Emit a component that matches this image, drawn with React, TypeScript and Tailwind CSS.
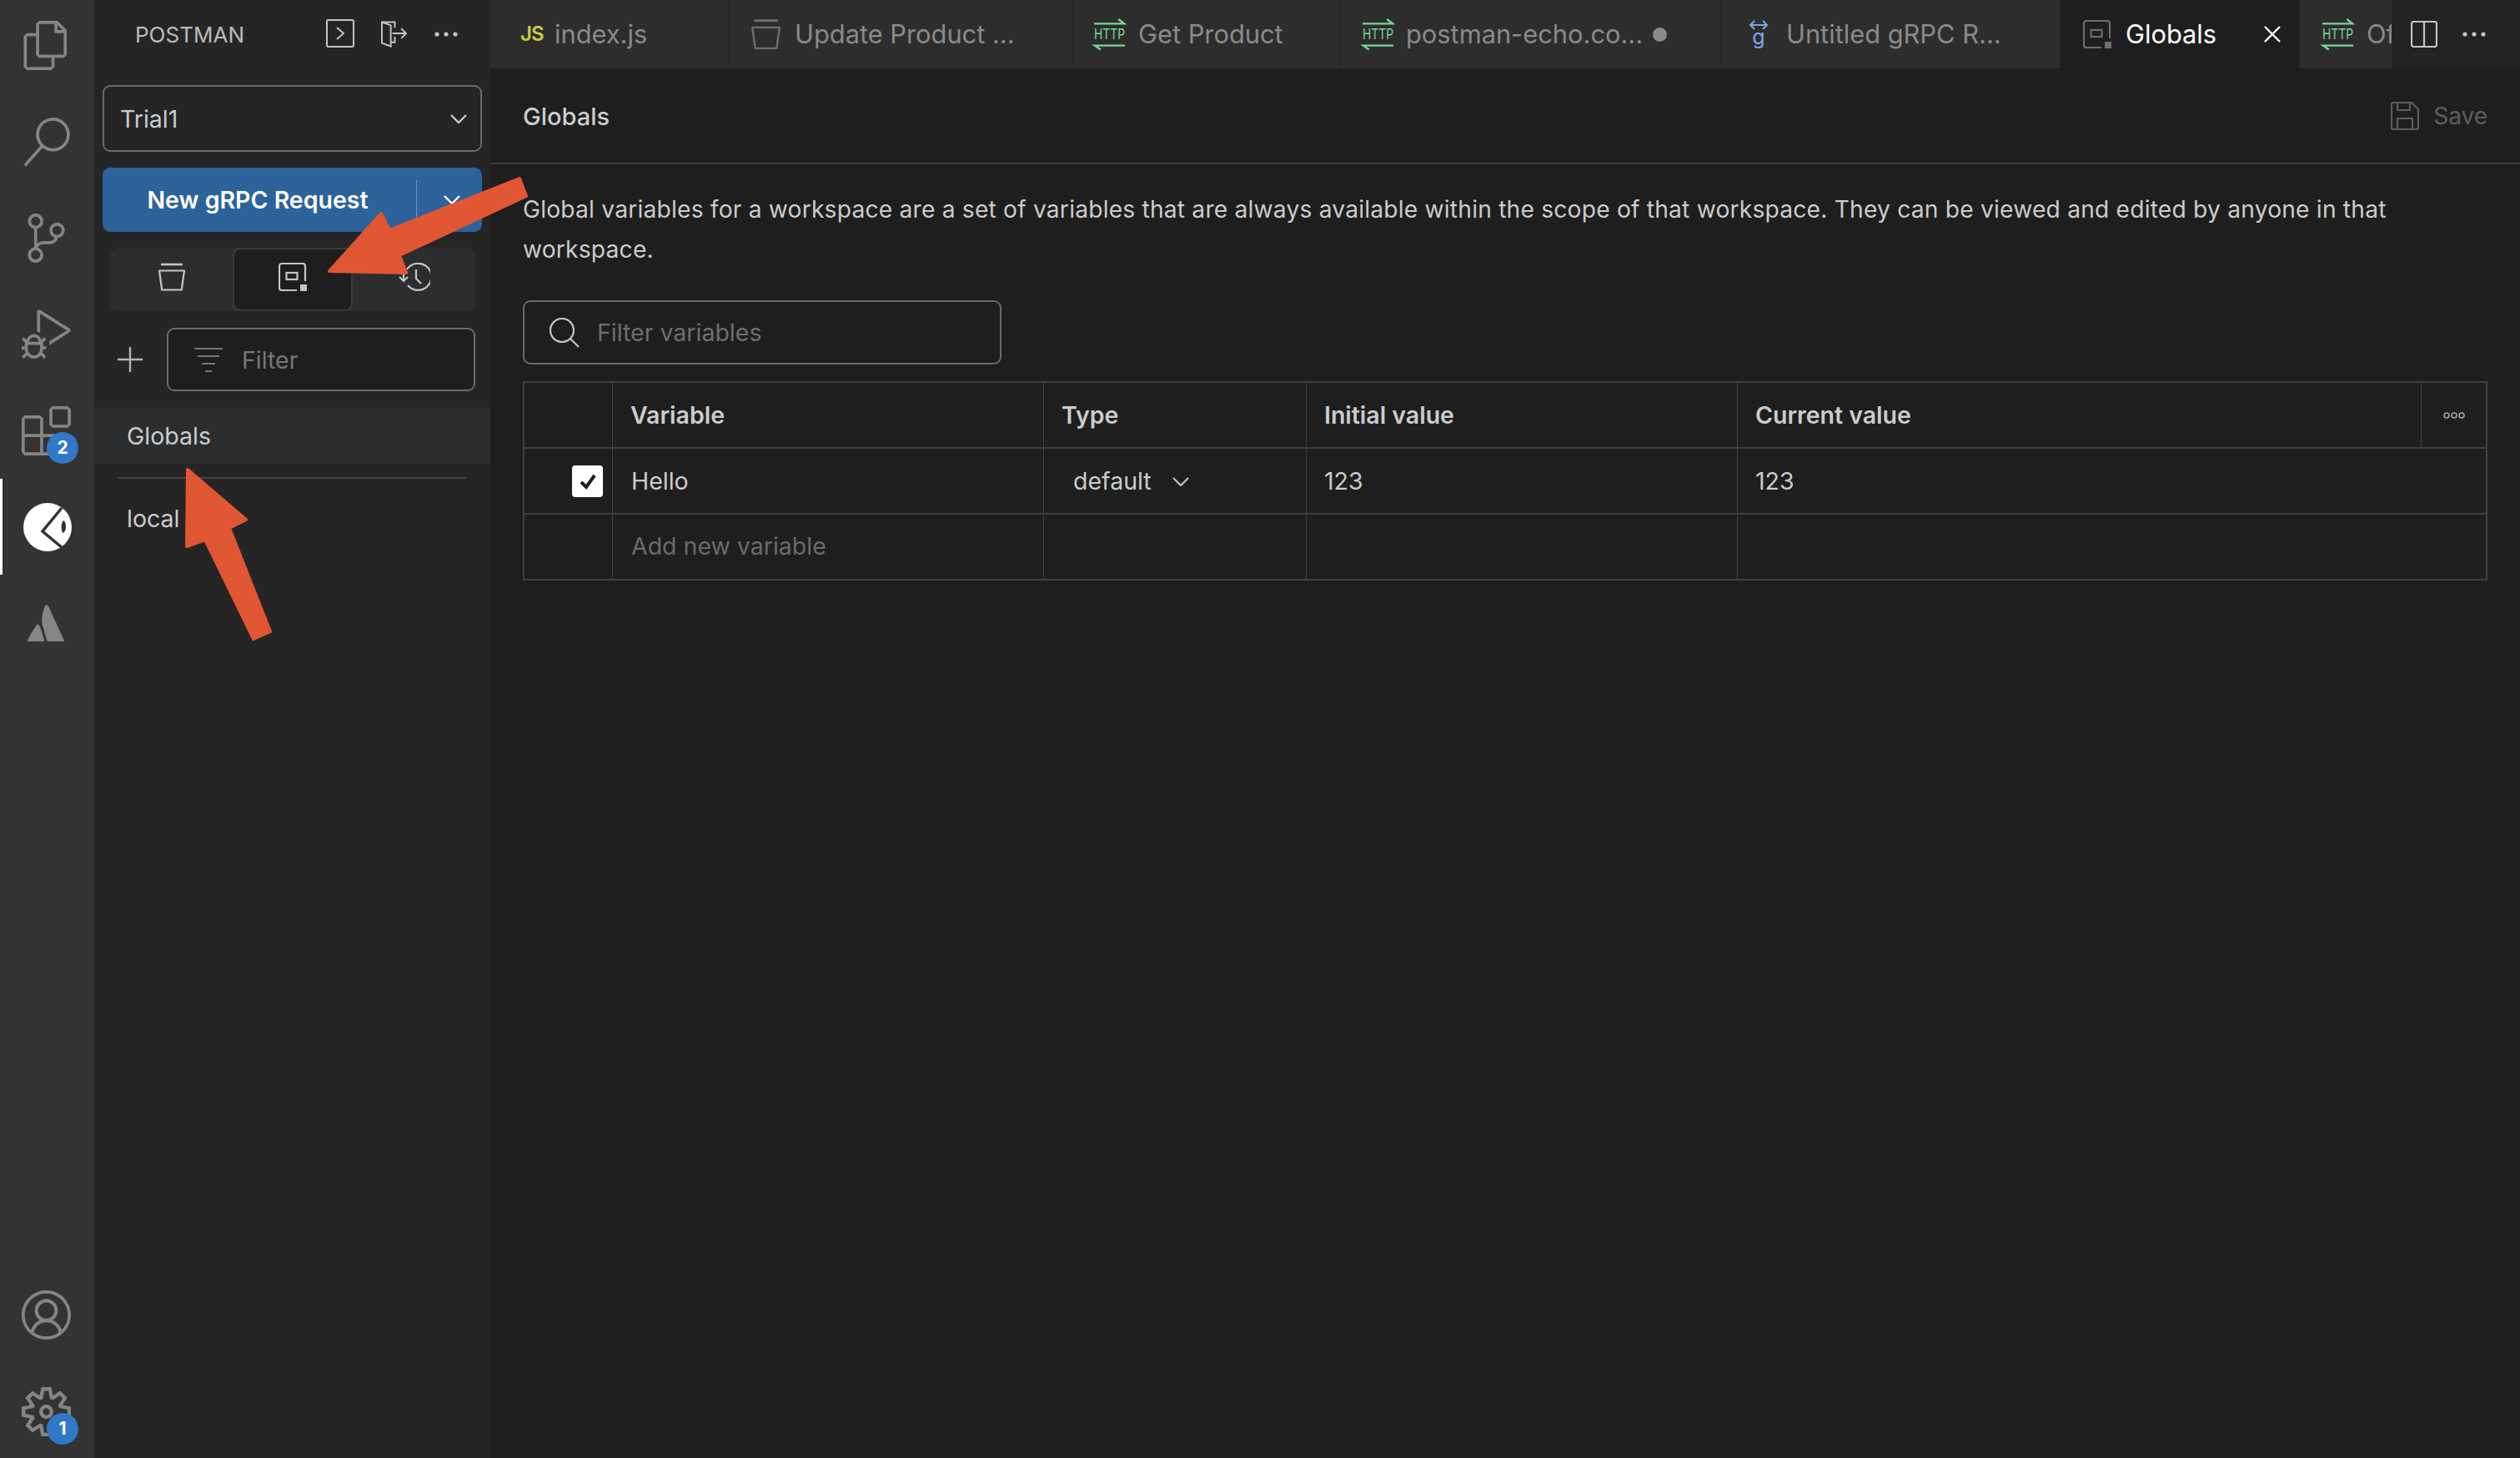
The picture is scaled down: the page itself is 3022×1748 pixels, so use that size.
import type { ReactNode } from "react";
import {
  VscAccount,
  VscDebugAlt,
  VscExtensions,
  VscFiles,
  VscSearch,
  VscSettingsGear,
  VscSourceControl,
} from "react-icons/vsc";

function CollectionIcon({ className }: { className?: string }) {
  return (
    <svg viewBox="0 0 34 34" fill="none" stroke="currentColor" strokeWidth="2.2" className={className}>
      <path d="M4 2h26" strokeWidth="2.6" />
      <path d="M2 9.5h30l-3.2 23H5.2z" strokeLinejoin="round" />
    </svg>
  );
}

function EnvIcon({ className }: { className?: string }) {
  return (
    <svg viewBox="0 0 34 34" fill="none" stroke="currentColor" strokeWidth="2.2" className={className}>
      <path d="M32 22V4a3 3 0 0 0-3-3H4a3 3 0 0 0-3 3v26a3 3 0 0 0 3 3h18" />
      <rect x="9.5" y="12" width="13" height="8" />
      <rect x="26" y="26" width="8" height="8" fill="currentColor" stroke="none" />
    </svg>
  );
}

function HistoryIcon({ className }: { className?: string }) {
  return (
    <svg viewBox="0 0 38 34" fill="none" stroke="currentColor" strokeWidth="2.2" className={className}>
      <path d="M10 8a16 16 0 1 1 1 19" />
      <path d="M21 8v11l6 6" />
      <path d="M6 11v11M1 17l5 5 5-5" />
    </svg>
  );
}

function ChevronDown({ className }: { className?: string }) {
  return (
    <svg viewBox="0 0 20 11" fill="none" stroke="currentColor" strokeWidth="2.4" className={className}>
      <path d="M1 1l9 9 9-9" />
    </svg>
  );
}

function DotsIcon({ className }: { className?: string }) {
  return (
    <svg viewBox="0 0 28 6" fill="currentColor" className={className}>
      <circle cx="3" cy="3" r="2.6" />
      <circle cx="14" cy="3" r="2.6" />
      <circle cx="25" cy="3" r="2.6" />
    </svg>
  );
}

function HttpIcon() {
  return (
    <svg viewBox="0 0 40 38" className="h-[38px] w-[39px] shrink-0 overflow-visible text-[#7bd69b]" fill="none" stroke="currentColor" strokeWidth="2.4">
      <path d="M1 6h37L31 0.5" />
      <path d="M39 33H2l7 5" />
      <text x="20" y="25.5" textAnchor="middle" fill="currentColor" stroke="none" fontSize="18" textLength="38" lengthAdjust="spacingAndGlyphs" fontFamily="Inter">
        HTTP
      </text>
    </svg>
  );
}

function JsIcon() {
  return <span className="w-[24px] shrink-0 text-[24px] leading-none font-semibold tracking-[-1px] text-[#cbcb41]">JS</span>;
}

function GrpcIcon() {
  return (
    <svg viewBox="0 0 24 38" className="h-[38px] w-[24px] shrink-0 text-[#7ba8ea]" fill="none" stroke="currentColor" strokeWidth="2">
      <path d="M2 8h20M7 3L2 8l5 5M17 3l5 5-5 5" />
      <text x="12" y="31" textAnchor="middle" fill="currentColor" stroke="none" fontSize="25" fontFamily="Inter">
        g
      </text>
    </svg>
  );
}

type TabProps = {
  width: string;
  pad: string;
  gap: string;
  icon: ReactNode;
  label: string;
  active?: boolean;
  children?: ReactNode;
};

function Tab({ width, pad, gap, icon, label, active, children }: TabProps) {
  return (
    <div
      className={`flex h-full shrink-0 items-center border-r border-[#252525] ${width} ${pad} ${gap} ${
        active ? "bg-[#1e1e1e] text-white" : "bg-[#2d2d2d] text-[#8a8a8a]"
      }`}
    >
      {icon}
      <span className="whitespace-nowrap">{label}</span>
      {children}
    </div>
  );
}

function ActivityItem({ children, active }: { children: ReactNode; active?: boolean }) {
  return (
    <div
      className={`relative flex h-[115.4px] w-full shrink-0 items-center justify-center text-[#858585] ${
        active ? "border-l-[3px] border-white pr-[3px]" : "pr-[3px]"
      }`}
    >
      {children}
    </div>
  );
}

function Badge({ n }: { n: number }) {
  return (
    <span className="absolute top-[59px] left-[56px] flex h-[38px] w-[38px] items-center justify-center rounded-full bg-[#3178c6] text-[21px] font-bold text-white">
      {n}
    </span>
  );
}

function ActivityBar() {
  return (
    <aside className="-mt-[3px] flex h-[1753px] w-[113px] shrink-0 flex-col bg-[#333333]">
      <ActivityItem>
        <VscFiles size={59} />
      </ActivityItem>
      <ActivityItem>
        <VscSearch size={59} />
      </ActivityItem>
      <ActivityItem>
        <VscSourceControl size={59} />
      </ActivityItem>
      <ActivityItem>
        <VscDebugAlt size={59} />
      </ActivityItem>
      <ActivityItem>
        <VscExtensions size={59} />
        <Badge n={2} />
      </ActivityItem>
      <ActivityItem active>
        <svg viewBox="0 0 58 58" className="h-[58px] w-[58px]">
          <circle cx="29" cy="29" r="29" fill="#ffffff" />
          <path d="M46 6L23 34l24 20" fill="none" stroke="#333333" strokeWidth="3.5" />
          <path d="M48 21c-3 4-3 9-1 15 3-1 4-4 4-8 0-3-1-6-3-7z" fill="#333333" />
        </svg>
      </ActivityItem>
      <ActivityItem>
        <svg viewBox="0 0 44 44" className="h-[44px] w-[44px]" fill="#858585">
          <path d="M22 0c3 0 4 3 5 6l17 37c0 1 0 1-1 1H26c-1 0-2 0-3-2-2-6-3-12-5-17-2-8 0-18 4-25z" />
          <path d="M11 24c1-1 2 0 3 1 2 3 5 13 6 17 0 1 0 2-1 2H1c-1 0-1-1-1-1 3-7 7-13 11-19z" />
        </svg>
      </ActivityItem>
      <div className="flex-1" />
      <ActivityItem>
        <VscAccount size={59} />
      </ActivityItem>
      <ActivityItem>
        <VscSettingsGear size={59} />
        <Badge n={1} />
      </ActivityItem>
    </aside>
  );
}

function Sidebar() {
  return (
    <aside className="flex h-full w-[475px] shrink-0 flex-col bg-[#252526] text-[28.5px] text-[#cccccc]">
      <div className="flex h-[82px] items-center pl-[49px]">
        <span className="w-[229px] text-[26px] text-[#bbbbbb]">POSTMAN</span>
        <svg viewBox="0 0 34 34" className="mt-[-2px] h-[34px] w-[34px] text-[#c5c5c5]" fill="none" stroke="currentColor" strokeWidth="2">
          <rect x="1" y="1" width="32" height="32" rx="2" />
          <path d="M13 10l8 7-8 7" />
        </svg>
        <svg viewBox="0 0 32 34" className="ml-[32px] h-[34px] w-[31px] text-[#c5c5c5]" fill="none" stroke="currentColor" strokeWidth="2">
          <path d="M17 9V2H1v26l11 4V6L1 2" />
          <path d="M12 27h5v-7M14 16h17M25 10l6 6-6 6" />
        </svg>
        <DotsIcon className="ml-[33px] w-[28px] text-[#c5c5c5]" />
      </div>

      <div className="mx-[10px] mt-[20px] flex h-[80px] items-center justify-between rounded-[9px] border-2 border-[#6a6a6a] pr-[16px] pl-[19px]">
        <span className="pt-[2px]">Trial1</span>
        <ChevronDown className="w-[20px] text-[#cccccc]" />
      </div>

      <div className="mx-[10px] mt-[19px] flex h-[77px] items-center rounded-[9px] bg-[#2d629b] font-semibold text-white">
        <span className="w-[376px] pt-[1px] pr-[4px] text-center">New gRPC Request</span>
        <span className="mt-[15px] h-[50px] w-px self-start bg-[#6f95bf]" />
        <ChevronDown className="ml-[32px] w-[20px]" />
      </div>

      <div className="mt-[19px] ml-[19px] flex h-[76px] w-[438px] items-stretch rounded-[9px] bg-[#2c2d2f] text-[#c5c5c5]">
        <div className="flex w-[147px] items-center justify-center pb-[6px]">
          <CollectionIcon className="h-[34px] w-[34px]" />
        </div>
        <div className="flex w-[144px] items-center justify-center rounded-[9px] border-2 border-[#3a3a3a] bg-[#1e1e1e] pb-[6px]">
          <EnvIcon className="h-[34px] w-[34px]" />
        </div>
        <div className="flex flex-1 items-center justify-center pb-[6px]">
          <HistoryIcon className="h-[34px] w-[38px]" />
        </div>
      </div>

      <div className="mt-[20px] flex h-[76px] items-center">
        <svg viewBox="0 0 30 30" className="ml-[28px] h-[30px] w-[30px] text-[#b5b5b5]" fill="none" stroke="currentColor" strokeWidth="2.4">
          <path d="M0 15h30M15 0v30" />
        </svg>
        <div className="ml-[29px] flex h-full w-[370px] items-center rounded-[9px] border-2 border-[#6a6a6a] bg-[#1e1e1e] pl-[31px] text-[#777777]">
          <svg viewBox="0 0 34 30" className="h-[30px] w-[34px]" fill="none" stroke="currentColor" strokeWidth="2.2">
            <path d="M0 2h34M4 11h26M9 20h16M13 29h8" />
          </svg>
          <span className="ml-[23px] pt-[2px]">Filter</span>
        </div>
      </div>

      <div className="mt-[20px] flex h-[67px] items-center bg-[#2c2d2f] pt-[2px] pl-[39px]">Globals</div>
      <div className="mx-[29px] mt-[16px] h-[2px] bg-[#444444]" />
      <div className="mt-[15px] flex h-[67px] items-center pl-[39px]">local</div>
    </aside>
  );
}

function TabBar() {
  return (
    <div className="flex h-[82px] shrink-0 text-[30.8px]">
      <Tab width="w-[287px]" pad="pl-[36px]" gap="gap-[17px]" icon={<JsIcon />} label="index.js" />
      <Tab
        width="w-[412px]"
        pad="pl-[25px]"
        gap="gap-[16px]"
        icon={<CollectionIcon className="h-[38px] w-[37px] shrink-0 text-[#6e6e6e]" />}
        label="Update Product ..."
      />
      <Tab width="w-[321px]" pad="pl-[24px]" gap="gap-[15px]" icon={<HttpIcon />} label="Get Product" />
      <Tab width="w-[456px]" pad="pl-[25px]" gap="gap-[14px]" icon={<HttpIcon />} label="postman-echo.co...">
        <span className="-ml-[2px] h-[17px] w-[17px] shrink-0 rounded-full bg-[#8a8a8a]" />
      </Tab>
      <Tab width="w-[407px]" pad="pl-[33px]" gap="gap-[21px]" icon={<GrpcIcon />} label="Untitled gRPC R..." />
      <Tab
        width="w-[287px]"
        pad="pl-[27px]"
        gap="gap-[17px]"
        active
        icon={<EnvIcon className="h-[34px] w-[34px] shrink-0 text-[#6e6e6e]" />}
        label="Globals"
      >
        <svg viewBox="0 0 20 20" className="ml-[40px] h-[20px] w-[20px] shrink-0" fill="none" stroke="currentColor" strokeWidth="2.4">
          <path d="M1 1l18 18M19 1L1 19" />
        </svg>
      </Tab>
      {/* this last tab is cut by the editor actions, as in VS Code */}
      <div className="flex h-full w-[110px] shrink-0 items-center gap-[15px] overflow-hidden bg-[#2d2d2d] pl-[26px] text-[#8a8a8a]">
        <HttpIcon />
        <span className="whitespace-nowrap">Of</span>
      </div>
      <div className="flex flex-1 items-center bg-[#232323] pl-[23px] text-[#c5c5c5]">
        <svg viewBox="0 0 32 32" className="h-[32px] w-[32px]" fill="none" stroke="currentColor" strokeWidth="2.2">
          <rect x="1" y="1" width="30" height="30" rx="2.5" />
          <path d="M16 1v30" />
        </svg>
        <DotsIcon className="ml-[30px] w-[28px]" />
      </div>
    </div>
  );
}

function VariablesTable() {
  const cell = "flex h-full shrink-0 items-center border-r-[1.5px] border-[#3f3f3f]";
  const row = "flex h-[79px] border-b-2 border-[#3f3f3f] last:h-[77px] last:border-b-0";
  return (
    <div className="mt-[20px] w-[2356px] border-2 border-[#3f3f3f] text-[28.5px]">
      <div className={`${row} font-semibold text-[#cccccc]`}>
        <div className={`${cell} w-[106px]`} />
        <div className={`${cell} w-[517px] pt-[2px] pl-[21px]`}>Variable</div>
        <div className={`${cell} w-[315px] pt-[2px] pl-[21px]`}>Type</div>
        <div className={`${cell} w-[517px] pt-[2px] pl-[21px]`}>Initial value</div>
        <div className={`${cell} w-[820px] pt-[2px] pl-[21px]`}>Current value</div>
        <div className="flex flex-1 items-center justify-center text-[#a5a5a5]">
          <svg viewBox="0 0 26 8" className="w-[26px]" fill="none" stroke="currentColor" strokeWidth="1.6">
            <circle cx="4" cy="4" r="3" />
            <circle cx="13" cy="4" r="3" />
            <circle cx="22" cy="4" r="3" />
          </svg>
        </div>
      </div>
      <div className={`${row} text-[#cccccc]`}>
        <div className={`${cell} w-[106px] justify-end pr-[11px]`}>
          <span className="flex h-[38px] w-[37px] items-center justify-center rounded-[4px] bg-white">
            <svg viewBox="0 0 24 24" className="h-[24px] w-[24px]" fill="none" stroke="#1e1e1e" strokeWidth="4">
              <path d="M4 13l6 6L20 5" />
            </svg>
          </span>
        </div>
        <div className={`${cell} w-[517px] pt-[2px] pl-[22px]`}>Hello</div>
        <div className={`${cell} w-[315px] pt-[2px] pl-[35px]`}>
          default
          <ChevronDown className="ml-[25px] w-[20px] text-[#bbbbbb]" />
        </div>
        <div className={`${cell} w-[517px] pt-[2px] pl-[21px]`}>123</div>
        <div className="flex h-full flex-1 items-center pt-[2px] pl-[21px]">123</div>
      </div>
      <div className={row}>
        <div className={`${cell} w-[106px]`} />
        <div className={`${cell} w-[517px] pl-[22px] text-[#6b6b6b]`}>Add new variable</div>
        <div className={`${cell} w-[315px]`} />
        <div className={`${cell} w-[517px]`} />
        <div className="flex-1" />
      </div>
    </div>
  );
}

function GlobalsPage() {
  return (
    <div className="flex min-h-0 flex-1 flex-col">
      <div className="flex h-[115px] shrink-0 items-center justify-between border-b-2 border-[#3f3f3f] px-[39px]">
        <span className="pt-[2px] text-[29px] font-medium text-[#cccccc]">Globals</span>
        <span className="flex items-center gap-[17px] text-[28px] text-[#5e5e5e]">
          <svg viewBox="0 0 34 34" className="h-[34px] w-[34px]" fill="none" stroke="currentColor" strokeWidth="2.2">
            <path d="M1 3a2 2 0 0 1 2-2h22l8 8v22a2 2 0 0 1-2 2H3a2 2 0 0 1-2-2z" />
            <path d="M8 1v9h15V1M8 33V20h18v13" />
          </svg>
          Save
        </span>
      </div>
      <div className="flex flex-col px-[39px] pt-[30px]">
        <p className="text-[28.2px] leading-[48px] tracking-[0.2px] text-[#cccccc]">
          Global variables for a workspace are a set of variables that are always available within the scope of that
          workspace. They can be viewed and edited by anyone in that workspace.
        </p>
        <div className="mt-[37px] flex h-[77px] w-[574px] items-center rounded-[9px] border-2 border-[#6a6a6a] pl-[30px] text-[28.5px] text-[#6e6e6e]">
          <svg viewBox="0 0 36 36" className="h-[36px] w-[36px] text-[#c5c5c5]" fill="none" stroke="currentColor" strokeWidth="2.2">
            <circle cx="15" cy="15" r="14" />
            <path d="M25 25l10 10" />
          </svg>
          <span className="ml-[21px] pt-[2px]">Filter variables</span>
        </div>
        <VariablesTable />
      </div>
    </div>
  );
}

export default function App() {
  return (
    <div className="relative flex h-[1748px] w-[3022px] overflow-hidden bg-[#1e1e1e] font-['Inter',sans-serif]">
      <ActivityBar />
      <Sidebar />
      <main className="flex h-full min-w-0 flex-1 flex-col">
        <TabBar />
        <GlobalsPage />
      </main>
      {/* the two annotation arrows drawn on top of the screenshot */}
      <svg viewBox="0 0 3022 1748" className="pointer-events-none absolute inset-0 h-full w-full" fill="#e05633" stroke="#e05633" strokeWidth="4" strokeLinejoin="round">
        <path d="M395 325L457 256l10 20 156-62 8 21-152 71 8 21z" />
        <path d="M225 563l70 60-20 10 49 124-20 9-58-119-22 8z" />
      </svg>
    </div>
  );
}
